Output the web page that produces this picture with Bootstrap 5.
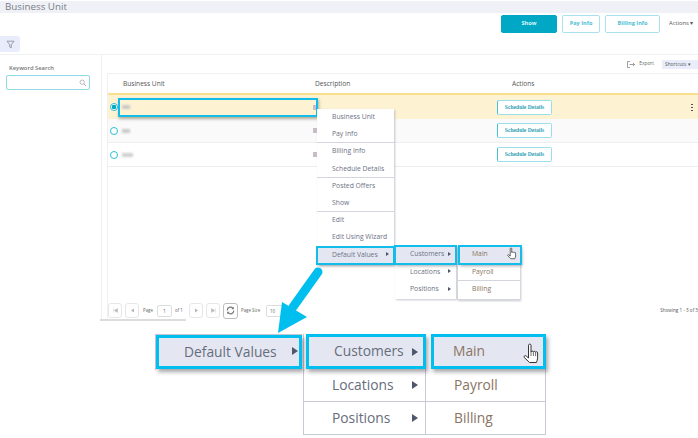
<!DOCTYPE html>
<html lang="en">
<head>
<meta charset="utf-8">
<title>Business Unit</title>
<link rel="stylesheet" href="https://cdn.jsdelivr.net/npm/bootstrap@5.3.0/dist/css/bootstrap.min.css">
<style>
html,body{margin:0;height:438px;overflow:hidden;background:#fff}
body{position:relative;width:698px;font-family:"Open Sans","Noto Sans",sans-serif;color:#5b6270}
.title-strip{height:12px;margin-top:1px;background:#f0f1f6;font-size:9.8px;line-height:11px;padding-left:5px;color:#777c88;white-space:nowrap}
.top-actions{height:21px;gap:5px}
.tbtn{height:18px;font-size:5.6px;font-weight:700;border-radius:2px;border:1px solid #a8e2ec;color:#4cc0d4;background:#fff;padding:0;display:flex;align-items:center;justify-content:center}
.tbtn-show{width:56px;background:#00a8c6;border-color:#00a8c6;color:#dff6fa}
.tbtn-pay{width:38px}
.tbtn-bill{width:55px;margin-right:4px}
.act-menu{font-size:5.8px;color:#555;width:29px;white-space:nowrap;overflow:hidden}
.filter-wrap{height:20px}
.filter-btn{width:20px;height:16px;background:#e9edfb;border-radius:0 3px 3px 0}
.work-area{border-top:1px solid #eef0f2;height:266px}
.side-pane{width:102px;border-right:1px solid #eef0f2;flex:none;padding:9px 0 0 9px}
.kw-label{font-size:5.8px;font-weight:600;color:#777;line-height:8px;margin-bottom:3px}
.kw-input{width:84px;height:15px;margin-left:-3px;border:1px solid #8fd8e6;border-radius:2px;padding-right:2px;color:#aaa}
.main-pane{flex:1;min-width:0;padding-left:5px;display:flex;flex-direction:column}
.tool-row{height:18px;gap:8px;font-size:4.8px;color:#666;flex:none}
.short-btn{background:#e9edfb;width:36px;height:9px;line-height:9px;padding-left:3px;color:#555;white-space:nowrap;overflow:hidden}
.grid-box{flex:1;border-top:1px solid #eef0f2;border-left:1px solid #eef0f2;position:relative;min-height:0}
.grid-head{height:21px;font-size:6.6px;font-weight:400;color:#555;border-bottom:2px solid #fbdf90}
.c-name{width:207px;padding-left:15px;flex:none}
.c-desc{width:197px;flex:none}
.c-act{width:60px;flex:none}
.grid-row{height:24px;border-bottom:1px solid #eceef0;background:#fff;position:relative}
.grid-row.row-sel{background:#fdf3d3;border-bottom:0}
.grid-row.row-alt{background:#fafafa}
.lead-cell{width:205px;flex:none;display:flex;align-items:center}
.desc-cell{width:184px;flex:none}
.radio-dot{width:8px;height:8px;border:1.2px solid #2cbdd6;border-radius:50%;margin-left:2px;margin-right:4px;flex:none;display:flex;align-items:center;justify-content:center;background:#fff}
.radio-dot i{display:block;width:4px;height:4px;background:#00a8c6;border-radius:1px}
.blur-a{display:block;width:8px;height:4px;background:#c9c9c9;filter:blur(1px)}
.blur-b{display:block;width:11px;height:4px;background:#d0d0d0;filter:blur(1px)}
.blur-d{display:block;width:5px;height:5px;background:#c8bcc6;filter:blur(.5px)}
.sd-btn{width:55px;height:15px;flex:none;border:1px solid #9adfe9;border-left:1.5px solid #45c0d4;border-radius:2px;background:#fff;color:#2f9fb7;font-family:"Liberation Serif",serif;font-weight:700;font-size:5.6px;display:flex;align-items:center;justify-content:center;white-space:nowrap}
.kebab{width:2px;height:8px;background:radial-gradient(circle,#555 1px,transparent 1px) 0 0/2px 3px;position:absolute;right:5px;top:8px}
.pager{height:17px;gap:3px;font-size:4.4px;color:#666;position:absolute;left:0;right:0;bottom:1px}
.pg{width:14px;height:15px;border:1px solid #e7e7e7;border-radius:3px;display:flex;align-items:center;justify-content:center;flex:none}
.pg-txt{width:12px;text-align:center;flex:none}
.pg-sz{width:22px;white-space:nowrap;flex:none}
.pg-of{width:11px;white-space:nowrap;flex:none}
.pg-ref{width:15px;height:16px;border-color:#bdbdbd}
.pg-gap{margin-left:2px}
.pg-num{width:15px;height:12px;border:1px solid #ddd;border-radius:2px;color:#555;text-align:center;line-height:10px;flex:none}
.pg-size{width:18px;height:12px;border:1px solid #ddd;border-radius:2px;padding-left:3px;line-height:10px;flex:none}
.showing{margin-left:auto;font-size:4.6px;white-space:nowrap;color:#555}
.pager-shade{position:absolute;left:100px;top:319px;width:86px;height:2px;background:#dcdcdc}

.ctx{position:absolute;background:#fff;box-shadow:1px 1px 2px rgba(90,95,120,.35);font-size:6.8px;color:#6c7285}
.ctx-item{height:17.2px;display:flex;align-items:center;padding-left:15px;border-bottom:1px solid transparent;white-space:nowrap;position:relative}
.ctx-item.sep{border-bottom-color:#d4d6de}
.ctx-item.hi{background:#e4e7f1;outline:2px solid #12bde9;outline-offset:-1px;box-shadow:1px 2px 3px rgba(60,60,70,.45);z-index:2}
.tri{position:absolute;top:50%;margin-top:-2.5px;right:5px;width:0;height:0;border-left:3px solid #50566b;border-top:2.5px solid transparent;border-bottom:2.5px solid transparent}
.menu-a{left:317px;top:109px;width:77px}
.menu-b{left:395px;top:246px;width:61px}
.menu-c{left:457px;top:246px;width:63px;border-left:1px solid #d4d6de;border-bottom:1px solid #d4d6de;color:#8a7462}
.menu-b .ctx-item,.menu-c .ctx-item{height:17.6px}
.menu-c .ctx-item{padding-left:14px}
.menu-c .ctx-item.hi{margin-left:1px;margin-right:-1px;padding-left:13px}
.hand-sm{position:absolute;right:4px;top:1px}
.sel-cell{position:absolute;left:118px;top:98px;width:200px;height:19px;border:2px solid #12bde9;box-shadow:1px 2px 3px rgba(60,60,70,.4)}
.arrow-layer{position:absolute;left:270px;top:262px;z-index:5}

.inset{position:absolute;background:#fff;font-size:13.8px;color:#666d7c}
.in-item{height:33px;display:flex;align-items:center;position:relative;white-space:nowrap;border-bottom:1px solid #c7c9d6;padding-left:28px}
.in-item.hi{height:35px;background:#e4e7f1;border:3px solid #00bfee;box-shadow:2px 3px 4px rgba(60,60,70,.45);z-index:2;padding-left:25px}
.in-a{left:155px;top:334px;width:147px;height:36px;border-top:1px solid #c7c9d6;border-left:1px solid #c7c9d6}
.in-a .in-item.hi{height:34px;padding-left:25px}
.in-b{left:303px;top:334px;width:123px;border-left:1px solid #c7c9d6}
.in-b .in-item.hi{margin-left:2px}
.in-c{left:425px;top:334px;width:121px;border-left:1px solid #c7c9d6;border-right:1px solid #c7c9d6;color:#8a7462}
.in-c .in-item.hi{margin-left:5px;margin-right:-1px;padding-left:19px}
.tri-big{position:absolute;top:50%;margin-top:-4px;right:8px;width:0;height:0;border-left:6px solid #50566b;border-top:4px solid transparent;border-bottom:4px solid transparent}
.hi .tri-big{right:5px}
.in-a .hi .tri-big{right:1px;margin-top:-5px}
.hand-lg{position:absolute;right:3px;top:6px}
</style>
</head>
<body>
<div class="title-strip">Business Unit</div>
<div class="top-actions d-flex justify-content-end align-items-center">
  <button class="tbtn tbtn-show" type="button">Show</button>
  <button class="tbtn tbtn-pay" type="button">Pay Info</button>
  <button class="tbtn tbtn-bill" type="button">Billing Info</button>
  <span class="act-menu">Actions &#9662;</span>
</div>
<div class="filter-wrap d-flex align-items-center">
  <span class="filter-btn d-flex align-items-center justify-content-center">
    <svg width="9" height="9" viewBox="0 0 9 9"><path d="M1 1.200h7L5.300 4.600v3.200L3.700 6.900V4.600z" fill="none" stroke="#8b93a8" stroke-width=".9"/></svg>
  </span>
</div>
<div class="work-area d-flex">
  <aside class="side-pane">
    <div class="kw-label">Keyword Search</div>
    <div class="kw-input d-flex align-items-center justify-content-end">
      <svg width="8" height="8" viewBox="0 0 8 8"><circle cx="3.200" cy="3.200" r="2.200" fill="none" stroke="#aaa" stroke-width=".8"/><path d="M5 5l2.200 2.200" stroke="#aaa" stroke-width=".9"/></svg>
    </div>
  </aside>
  <section class="main-pane">
    <div class="tool-row d-flex justify-content-end align-items-center">
      <span class="d-flex align-items-center gap-1">
        <svg width="8" height="7" viewBox="0 0 8 7"><path d="M3 .5H.5v6H3M2.500 3.500h5M6 2l1.500 1.500L6 5" fill="none" stroke="#777" stroke-width=".7"/></svg>Export</span>
      <span class="short-btn">Shortcuts &#9662;</span>
    </div>
    <div class="grid-box">
      <div class="grid-head d-flex align-items-center">
        <span class="c-name">Business Unit</span>
        <span class="c-desc">Description</span>
        <span class="c-act">Actions</span>
      </div>
      <div class="grid-row row-sel d-flex align-items-center">
        <span class="lead-cell"><span class="radio-dot"><i></i></span><span class="blur-a"></span></span>
        <span class="desc-cell"><span class="blur-d"></span></span>
        <span class="sd-btn">Schedule Details</span>
        <span class="kebab"></span>
      </div>
      <div class="grid-row row-alt d-flex align-items-center">
        <span class="lead-cell"><span class="radio-dot"></span><span class="blur-a"></span></span>
        <span class="desc-cell"><span class="blur-d"></span></span>
        <span class="sd-btn">Schedule Details</span>
      </div>
      <div class="grid-row d-flex align-items-center">
        <span class="lead-cell"><span class="radio-dot"></span><span class="blur-b"></span></span>
        <span class="desc-cell"><span class="blur-d"></span></span>
        <span class="sd-btn">Schedule Details</span>
      </div>
      <div class="pager d-flex align-items-center">
        <span class="pg"><svg width="5" height="5" viewBox="0 0 5 5"><path d="M.7.5v4M4.500.5v4L1.500 2.500z" fill="#b5b5b5" stroke="#b5b5b5" stroke-width=".4"/></svg></span>
        <span class="pg"><svg width="5" height="5" viewBox="0 0 5 5"><path d="M4 .5v4L1 2.500z" fill="#b5b5b5"/></svg></span>
        <span class="pg-txt">Page</span><span class="pg-num">1</span><span class="pg-of">of 1</span>
        <span class="pg"><svg width="5" height="5" viewBox="0 0 5 5"><path d="M1 .5v4l3-2z" fill="#b5b5b5"/></svg></span>
        <span class="pg"><svg width="5" height="5" viewBox="0 0 5 5"><path d="M4.300.5v4M.5.5v4l3-2z" fill="#b5b5b5" stroke="#b5b5b5" stroke-width=".4"/></svg></span>
        <span class="pg pg-ref"><svg width="9" height="9" viewBox="0 0 9 9"><path d="M1.200 4.500A3.300 3.300 0 0 1 7 2.300M7.800 4.500A3.300 3.300 0 0 1 2 6.700" fill="none" stroke="#777" stroke-width="1.100"/><path d="M7.800.8v2.500H5.300zM1.200 8.200V5.700h2.500z" fill="#777"/></svg></span>
        <span class="pg-sz">Page Size</span><span class="pg-size">10</span>
        <span class="showing">Showing 1 - 3 of 3</span>
      </div>
    </div>
  </section>
</div>
<div class="pager-shade"></div>

<div class="sel-cell"></div>

<div class="ctx menu-a">
  <div class="ctx-item">Business Unit</div>
  <div class="ctx-item sep">Pay Info</div>
  <div class="ctx-item">Billing Info</div>
  <div class="ctx-item sep">Schedule Details</div>
  <div class="ctx-item">Posted Offers</div>
  <div class="ctx-item sep">Show</div>
  <div class="ctx-item">Edit</div>
  <div class="ctx-item">Edit Using Wizard</div>
  <div class="ctx-item hi">Default Values<span class="tri"></span></div>
</div>
<div class="ctx menu-b">
  <div class="ctx-item hi">Customers<span class="tri"></span></div>
  <div class="ctx-item">Locations<span class="tri"></span></div>
  <div class="ctx-item">Positions<span class="tri"></span></div>
</div>
<div class="ctx menu-c">
  <div class="ctx-item hi">Main
    <svg class="hand-sm" width="10" height="14" viewBox="0 0 17 23"><path d="M5.500 2.200c0-1.500 2.500-1.500 2.500 0V9c.2-1.200 2.200-1.200 2.400 0 .2-1 2-1 2.200.2.300-.8 2-.7 2 .6v5c0 2-.6 3-1.200 4.700H6.500L1.300 14.500c-.8-1.300.7-2.500 1.900-1.500l2.300 2z" fill="#fff" stroke="#333" stroke-width="1.200"/></svg>
  </div>
  <div class="ctx-item sep">Payroll</div>
  <div class="ctx-item">Billing</div>
</div>

<svg class="arrow-layer" width="60" height="80" viewBox="0 0 60 80">
  <path d="M48 10L23 45" stroke="#00bfee" stroke-width="9" stroke-linecap="round" fill="none"/>
  <path d="M8 71L12 40 37 55z" fill="#00bfee"/>
</svg>

<div class="inset in-a">
  <div class="in-item hi">Default Values<span class="tri-big"></span></div>
</div>
<div class="inset in-b">
  <div class="in-item hi">Customers<span class="tri-big"></span></div>
  <div class="in-item">Locations<span class="tri-big"></span></div>
  <div class="in-item">Positions<span class="tri-big"></span></div>
</div>
<div class="inset in-c">
  <div class="in-item hi">Main
    <svg class="hand-lg" width="17" height="23" viewBox="0 0 17 23"><path d="M5.500 2.200c0-1.500 2.500-1.500 2.500 0V9c.2-1.200 2.200-1.200 2.400 0 .2-1 2-1 2.200.2.300-.8 2-.7 2 .6v5c0 2-.6 3-1.200 4.700H6.500L1.300 14.500c-.8-1.300.7-2.500 1.900-1.500l2.300 2z" fill="#fff" stroke="#333" stroke-width="1"/><path d="M8 9v4M10.400 9v4M12.600 9.200v4" stroke="#333" stroke-width=".7"/></svg>
  </div>
  <div class="in-item">Payroll</div>
  <div class="in-item">Billing</div>
</div>
</body>
</html>
